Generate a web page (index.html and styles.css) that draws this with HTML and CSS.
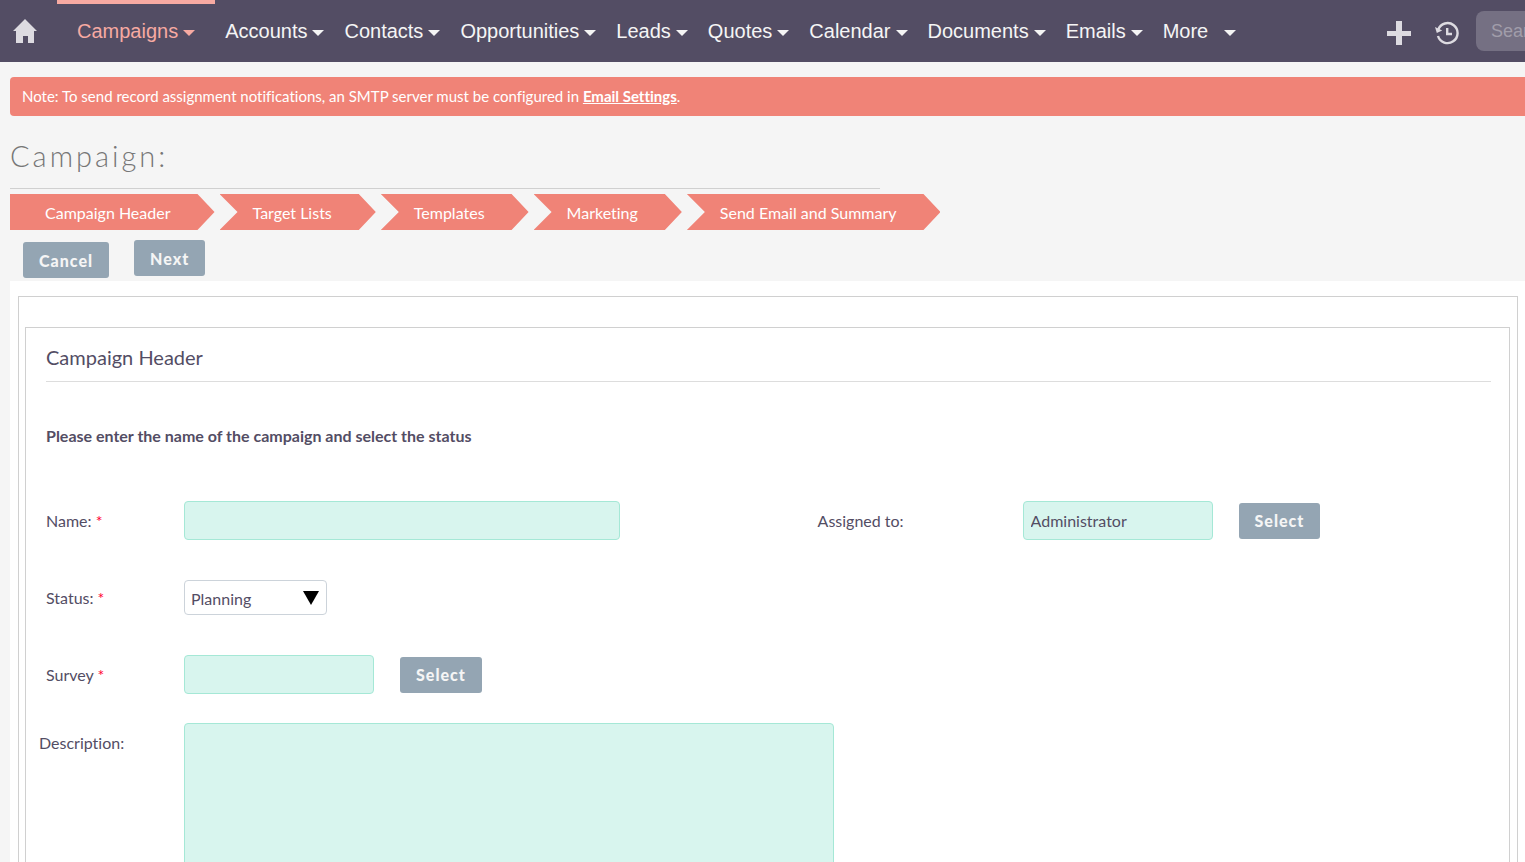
FILE: index.html
```html
<!DOCTYPE html>
<html lang="en">
  <head>
    <meta charset="UTF-8" />
    <meta name="viewport" content="width=device-width, initial-scale=1.0" />
    <title>Campaigns</title>
    <link rel="stylesheet" href="styles.css">
  </head>
  <body>
    <nav class="navbar">
      <a class="home" href="#" aria-label="Home">
        <svg width="24" height="24" viewBox="0 0 24 24" fill="currentColor">
          <path d="M12 0 24 12H21V24H15V17H10V24H3V12H0Z" />
        </svg>
      </a>
      <ul class="menu">
        <li class="active"><a href="#">Campaigns <span class="caret"></span></a></li>
        <li><a href="#">Accounts <span class="caret"></span></a></li>
        <li><a href="#">Contacts <span class="caret"></span></a></li>
        <li><a href="#">Opportunities <span class="caret"></span></a></li>
        <li><a href="#">Leads <span class="caret"></span></a></li>
        <li><a href="#">Quotes <span class="caret"></span></a></li>
        <li><a href="#">Calendar <span class="caret"></span></a></li>
        <li><a href="#">Documents <span class="caret"></span></a></li>
        <li><a href="#">Emails <span class="caret"></span></a></li>
        <li class="more"><a href="#">More <span class="caret"></span></a></li>
      </ul>
      <div class="tools">
        <button class="tool" type="button" aria-label="Create">
          <svg width="24" height="24" viewBox="0 0 24 24" fill="currentColor">
            <path d="M9 0H15V10H24V15H15V24H9V15H0V10H9Z" />
          </svg>
        </button>
        <button class="tool" type="button" aria-label="Recently viewed">
          <svg width="24" height="24" viewBox="0 0 24 24" fill="none" stroke="currentColor" stroke-width="2.4">
            <path d="M3.2 8.6A10 10 0 1 1 3 15" />
            <path d="M12.2 7V13H17" />
            <path d="M0 6 1.8 12 7.2 9.6Z" fill="currentColor" stroke="none" />
          </svg>
        </button>
        <input class="search" type="text" placeholder="Search..." aria-label="Search" />
      </div>
    </nav>

    <main class="content">
      <p class="alert">Note: To send record assignment notifications, an SMTP server must be configured in <a href="#">Email Settings</a>.</p>

      <h1 class="page-title">Campaign:</h1>

      <ol class="steps">
        <li>Campaign Header</li>
        <li>Target Lists</li>
        <li>Templates</li>
        <li>Marketing</li>
        <li>Send Email and Summary</li>
      </ol>

      <form class="wizard">
        <div class="actions">
          <button class="btn btn-cancel" type="button">Cancel</button>
          <button class="btn" type="button">Next</button>
        </div>

        <div class="panel">
          <div class="panel-outer">
            <div class="panel-inner">
              <h2 class="section-title">Campaign Header</h2>
              <p class="hint">Please enter the name of the campaign and select the status</p>

              <div class="row">
                <label for="name">Name: <span class="required">*</span></label>
                <div class="field"><input class="input input-wide" id="name" type="text" /></div>
                <label for="assigned">Assigned to:</label>
                <div class="field">
                  <input class="input" id="assigned" type="text" value="Administrator" />
                  <button class="btn" type="button">Select</button>
                </div>
              </div>

              <div class="row">
                <label for="status">Status: <span class="required">*</span></label>
                <div class="field">
                  <div class="select-wrap">
                    <select class="select" id="status">
                      <option>Planning</option>
                      <option>Active</option>
                      <option>Inactive</option>
                      <option>Complete</option>
                    </select>
                  </div>
                </div>
              </div>

              <div class="row">
                <label for="survey">Survey <span class="required">*</span></label>
                <div class="field">
                  <input class="input" id="survey" type="text" />
                  <button class="btn" type="button">Select</button>
                </div>
              </div>

              <div class="row-description">
                <label for="description">Description:</label>
                <textarea class="input textarea" id="description"></textarea>
              </div>
            </div>
          </div>
        </div>
      </form>
    </main>
  </body>
</html>
```
FILE: styles.css
```css
* {
  box-sizing: border-box;
}

body {
  font-family: Lato, "Open Sans", sans-serif;
  font-size: 16px;
  line-height: 20px;
  font-variant-ligatures: none;
  margin: 0;
  height: 100vh;
  overflow: hidden;
  background-color: #f5f5f5;
  color: #534d64;
}

/* top navigation */
.navbar {
  display: flex;
  align-items: center;
  height: 62px;
  overflow: hidden;
  background-color: #534d64;
  color: #f5f5f5;
  font-family: "Liberation Sans", Arial, sans-serif;
  font-size: 20px;
}

.home {
  display: flex;
  flex: none;
  width: 57px;
  padding-left: 13px;
  color: #dddbe1;
}

.menu {
  display: flex;
  flex: none;
  align-self: stretch;
  list-style: none;
  margin: 0;
  padding: 0;
}

.menu a {
  display: flex;
  align-items: center;
  gap: 5px;
  height: 62px;
  padding: 0 10px;
  color: #f5f5f5;
  text-decoration: none;
}

.menu .active a {
  padding: 0 20px 4px;
  border-top: 4px solid #f7aaa2;
  color: #f7aaa2;
}

.menu .more a {
  gap: 16px;
}

.caret {
  margin-top: 4px;
  border-top: 6px solid currentColor;
  border-left: 6px solid transparent;
  border-right: 6px solid transparent;
}

.tools {
  display: flex;
  flex: none;
  align-items: center;
  margin-left: auto;
  margin-right: -112px;
}

.tool {
  display: flex;
  margin: 4px 24px 0 0;
  padding: 0;
  border: none;
  background: none;
  color: #dddbe1;
  cursor: pointer;
}

.tool + .search {
  margin-left: -7px;
}

.search {
  width: 161px;
  height: 40px;
  padding: 0 15px;
  border: none;
  border-radius: 8px;
  background-color: #757083;
  color: #f5f5f5;
  font-family: inherit;
  font-size: 18px;
}

.search::placeholder {
  color: #a19daa;
}

/* page */
.content {
  padding: 15px 0 0 10px;
}

.alert {
  margin: 0;
  padding: 9px 12px 10px;
  border-radius: 4px 0 0 4px;
  background-color: #f08377;
  color: #fff;
  font-size: 15px;
}

.alert a {
  color: #fff;
  font-weight: bold;
}

.page-title {
  width: 870px;
  margin: 20px 0 5px;
  padding-bottom: 12px;
  border-bottom: 1px solid #d0d0d0;
  color: #777;
  font-size: 29px;
  font-weight: 300;
  line-height: 40px;
  letter-spacing: 3px;
}

.steps {
  display: flex;
  gap: 5px;
  list-style: none;
  margin: 0;
  padding: 0;
}

.steps li {
  padding: 9px 44px 7px 33px;
  background-color: #f08377;
  color: #fff;
  clip-path: polygon(0 0, calc(100% - 17px) 0, 100% 50%, calc(100% - 17px) 100%, 0 100%, 18px 50%);
}

.steps li:first-child {
  padding-left: 35px;
  clip-path: polygon(0 0, calc(100% - 17px) 0, 100% 50%, calc(100% - 17px) 100%, 0 100%);
}

.actions {
  display: flex;
  align-items: flex-start;
  gap: 25px;
  padding: 10px 13px 3px;
}

.btn {
  height: 36px;
  padding: 0 16px;
  border: none;
  border-radius: 3px;
  background-color: #94a5b3;
  color: #f5f5f5;
  font-family: inherit;
  font-size: 16px;
  font-weight: 900;
  letter-spacing: 1px;
  cursor: pointer;
}

.btn-cancel {
  margin-top: 2px;
}

.panel {
  padding: 15px 7px 0 8px;
  background-color: #fff;
}

.panel-outer {
  padding: 30px 7px 20px 6px;
  border: 1px solid #d0d0d0;
}

.panel-inner {
  padding: 15px 18px 20px 20px;
  border: 1px solid #d0d0d0;
}

.section-title {
  margin: 0;
  padding-bottom: 10px;
  border-bottom: 1px solid #ddd;
  font-size: 20px;
  font-weight: normal;
  line-height: 28px;
}

.hint {
  margin: 44px 0 55px;
  font-weight: bold;
}

.row {
  display: grid;
  grid-template-columns: 138px 633fr 205px 468fr;
  align-items: center;
  min-height: 39px;
  margin-bottom: 38px;
}

.required {
  color: #f03;
  font-size: 16px;
}

.field {
  display: flex;
  align-items: center;
  gap: 26px;
}

.input {
  width: 190px;
  height: 39px;
  padding: 0 7px 1px;
  border: 1px solid #a5e8d6;
  border-radius: 4px;
  background-color: #d8f5ee;
  color: #534d64;
  font-family: inherit;
  font-size: 16px;
}

.input-wide {
  width: 436px;
}

.select-wrap {
  position: relative;
}

.select-wrap::after {
  content: "";
  position: absolute;
  top: 11px;
  right: 8px;
  border-top: 14px solid #000;
  border-left: 8px solid transparent;
  border-right: 8px solid transparent;
  pointer-events: none;
}

.select {
  display: block;
  appearance: none;
  width: 143px;
  height: 35px;
  padding: 2px 6px 0;
  border: 1px solid #ccd3da;
  border-radius: 4px;
  background-color: #fff;
  color: #534d64;
  font-family: inherit;
  font-size: 16px;
}

.row-description {
  display: flex;
  margin: -9px 0 0 -7px;
}

.row-description label {
  width: 145px;
  padding-top: 10px;
}

.textarea {
  width: 650px;
  height: 180px;
  padding: 7px;
  resize: none;
}
```
